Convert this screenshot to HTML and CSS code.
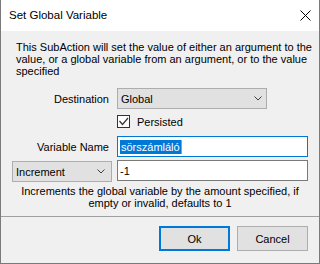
FILE: index.html
```html
<!DOCTYPE html>
<html>
<head>
    <meta charset="utf-8">
    <title>Set Global Variable</title>
    <link rel="stylesheet" href="styles.css">
</head>
<body>
    <div class="dialog">
        <div class="titlebar">
            <span class="title">Set Global Variable</span>
            <svg class="close" width="11" height="11" viewBox="0 0 11 11">
                <path d="M0.5 0.5 L10.5 10.5 M10.5 0.5 L0.5 10.5" stroke="#000" stroke-width="1" fill="none"/>
            </svg>
        </div>
        <div class="content">
            <p class="intro">This SubAction will set the value of either an argument to the<br>value, or a global variable from an argument, or to the value<br>specified</p>

            <div class="row row_dest">
                <span class="lbl">Destination</span>
                <div class="combo combo_dest">
                    <span>Global</span>
                    <svg class="chev" width="8" height="5" viewBox="0 0 8 5"><path d="M0.5 0.5 L4 4 L7.5 0.5" stroke="#404040" fill="none"/></svg>
                </div>
            </div>

            <div class="row row_check">
                <span></span>
                <label class="check">
                    <span class="box">
                        <svg width="11" height="11" viewBox="0 0 11 11"><path d="M1.5 5 L4.5 8.5 L10 2" stroke="#333" stroke-width="1.2" fill="none"/></svg>
                    </span>
                    Persisted
                </label>
            </div>

            <div class="row row_name">
                <span class="lbl">Variable Name</span>
                <div class="textbox focused"><span class="sel">sörszámláló</span></div>
            </div>

            <div class="row row_value">
                <div class="combo combo_op">
                    <span>Increment</span>
                    <svg class="chev" width="8" height="5" viewBox="0 0 8 5"><path d="M0.5 0.5 L4 4 L7.5 0.5" stroke="#404040" fill="none"/></svg>
                </div>
                <div class="textbox">-1</div>
            </div>

            <p class="hint">Increments the global variable by the amount specified, if<br>empty or invalid, defaults to 1</p>
        </div>
        <div class="footer">
            <button class="btn btn_default">Ok</button>
            <button class="btn">Cancel</button>
        </div>
    </div>
</body>
</html>
```

FILE: styles.css
```css
* {
    padding: 0px;
    margin: 0px;
    box-sizing: border-box;
}
body {
    font-family: "Liberation Sans", Arial, sans-serif;
    font-size: 11px;
    color: #000;
    background-color: #f0f0f0;
}
.dialog {
    width: 320px;
    height: 264px;
    background-color: #f0f0f0;
    border: 1px solid #7a7a7a;
    border-top: none;
    display: flex;
    flex-direction: column;
}
.titlebar {
    height: 31px;
    background-color: #fff;
    display: flex;
    align-items: center;
    padding-left: 8px;
    padding-right: 8px;
}
.title {
    flex: 1;
    font-size: 11.5px;
    line-height: 31px;
}
.close {
    display: block;
    margin-top: -1px;
}
.content {
    padding: 9px 11px 0px 11px;
}
.intro {
    line-height: 12px;
    padding-left: 4px;
    padding-top: 1px;
    white-space: nowrap;
}
.row {
    display: grid;
    grid-template-columns: 100px 191px;
    column-gap: 5px;
    align-items: center;
}
.row_dest {
    margin-top: 11px;
}
.row_check {
    margin-top: 6px;
}
.row_name {
    margin-top: 8px;
}
.row_value {
    margin-top: 3px;
    align-items: start;
}
.lbl {
    text-align: right;
    padding-right: 3px;
}
.combo {
    height: 21px;
    background-color: #e1e1e1;
    border: 1px solid #adadad;
    display: flex;
    align-items: center;
    justify-content: space-between;
    padding: 0px 4px 0px 3px;
}
.combo_dest {
    width: 150px;
}
.combo_op {
    margin-top: 1px;
    padding-right: 6px;
}
.chev {
    display: block;
}
.check {
    display: flex;
    align-items: center;
    height: 13px;
}
.box {
    width: 13px;
    height: 13px;
    border: 1px solid #333;
    background-color: #fff;
    margin-right: 7px;
    display: flex;
    align-items: center;
    justify-content: center;
}
.textbox {
    height: 21px;
    background-color: #fff;
    border: 1px solid #7a7a7a;
    padding-left: 2px;
    display: flex;
    align-items: center;
}
.focused {
    border-color: #0078d7;
}
.sel {
    background-color: #0078d7;
    color: #fff;
    line-height: 14px;
    padding: 0px 1px;
    border-right: 1px solid #f08c1e;
}
.hint {
    margin-top: 3px;
    line-height: 12px;
    text-align: center;
    margin-left: -11px;
    margin-right: -11px;
}
.footer {
    margin-top: 7px;
    border-top: 1px solid #a0a0a0;
    padding: 9px 11px 0px 0px;
    display: flex;
    justify-content: flex-end;
    gap: 7px;
}
.btn {
    width: 71px;
    height: 25px;
    font-family: "Liberation Sans", Arial, sans-serif;
    font-size: 11px;
    color: #000;
    background-color: #e1e1e1;
    border: 1px solid #adadad;
}
.btn_default {
    border: 2px solid #0078d7;
}
```
